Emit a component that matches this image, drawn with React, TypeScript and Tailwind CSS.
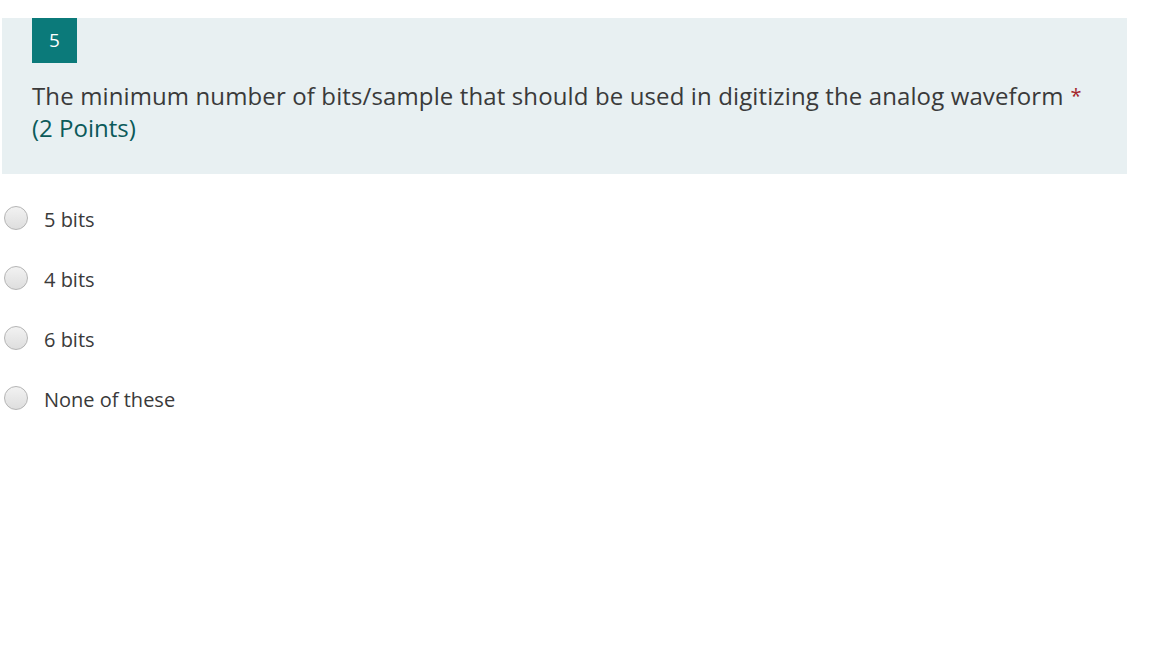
import React from 'react';

const options = ['5 bits', '4 bits', '6 bits', 'None of these'];

const App = () => {
  return (
    <div className="w-[1152px] h-[648px] bg-white pt-[18px] font-['Open_Sans',sans-serif]">
      <div className="ml-[2px] w-[1125px] h-[156px] bg-[#e8f0f2] pl-[30px]">
        <div className="w-[45px] h-[45px] bg-[#0b7a7a] text-white text-[19px] flex items-center justify-center">
          5
        </div>
        <div className="mt-[17px] text-[24px] tracking-[0.12px] leading-[32px] text-[#3a3a3a]">
          The minimum number of bits/sample that should be used in digitizing the analog waveform
          <span className="text-[#a4262c] ml-[7px] text-[20px] align-top">*</span>
          <div className="text-[#0b5a5a] tracking-normal">(2 Points)</div>
        </div>
      </div>
      <div className="mt-[32px] ml-[4px] flex flex-col gap-[36px]">
        {options.map((o) => (
          <div key={o} className="flex items-center h-[24px]">
            <div className="w-[24px] h-[24px] rounded-full border border-[#b5b5b5] bg-gradient-to-b from-[#f2f2f2] to-[#dedede]" />
            <span className="ml-[16px] mt-[3px] text-[20px] text-[#3a3a3a]">{o}</span>
          </div>
        ))}
      </div>
    </div>
  );
};

export default App;
